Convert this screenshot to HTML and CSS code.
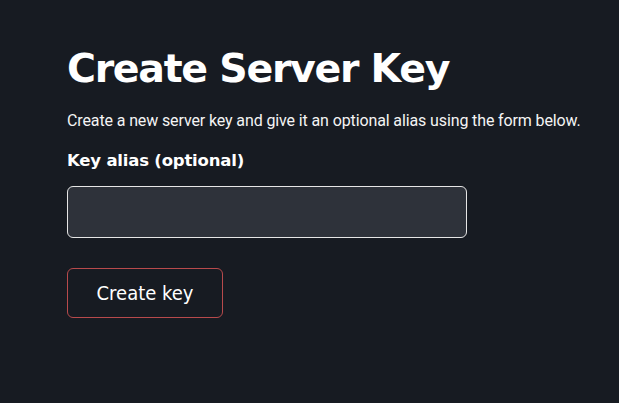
FILE: index.html
```html
<!DOCTYPE html>
<html lang="en">
<head>
<meta charset="utf-8">
<title>Create Server Key</title>
<link rel="stylesheet" href="styles.css">
</head>
<body>
<main class="page">
  <h1 class="title">Create Server Key</h1>
  <p class="lead">Create a new server key and give it an optional alias using the form below.</p>
  <form class="form">
    <label class="label" for="alias">Key alias (optional)</label>
    <input class="input" id="alias" type="text">
    <button class="btn" type="button">Create key</button>
  </form>
</main>
</body>
</html>
```

FILE: styles.css
```css
html, body {
  margin: 0;
  padding: 0;
  background: #171b22;
  color: #ffffff;
  height: 100%;
}
.page {
  padding: 40px 0 0 67px;
  display: flex;
  flex-direction: column;
}
.title {
  margin: 0;
  font-family: "DejaVu Sans", sans-serif;
  font-weight: 700;
  font-size: 39.5px;
  line-height: 56px;
  letter-spacing: -1.3px;
  color: #ffffff;
}
.lead {
  margin: 14px 0 0 0;
  font-family: Roboto, sans-serif;
  font-weight: 400;
  font-size: 16px;
  line-height: 22px;
  letter-spacing: -0.12px;
  color: #f4f4f4;
}
.form {
  display: flex;
  flex-direction: column;
  align-items: flex-start;
}
.label {
  margin-top: 18px;
  font-family: "DejaVu Sans", sans-serif;
  font-weight: 700;
  font-size: 16.5px;
  line-height: 22px;
  letter-spacing: -0.2px;
  color: #ffffff;
}
.input {
  margin-top: 14px;
  box-sizing: border-box;
  width: 400px;
  height: 52px;
  background: #2e323a;
  border: 1px solid #e6e6e6;
  border-radius: 6px;
  outline: none;
}
.btn {
  margin-top: 30px;
  box-sizing: border-box;
  width: 156px;
  height: 50px;
  background: transparent;
  border: 1px solid #b84a4c;
  border-radius: 6px;
  color: #ffffff;
  font-family: "DejaVu Sans Condensed", "DejaVu Sans", sans-serif;
  font-size: 20px;
}
```
